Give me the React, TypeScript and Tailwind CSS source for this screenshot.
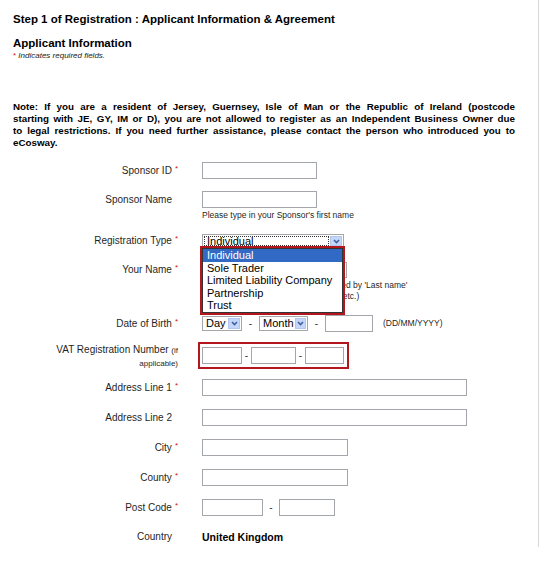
import React from 'react';

type Kids = { children?: React.ReactNode };

const Star = () => (
  <span className="ml-[3px] align-top text-[8px] leading-none text-[#d4141c]">*</span>
);

function Label({ children, star }: Kids & { star?: boolean }) {
  return (
    <div
      className={`w-[178px] shrink-0 text-right text-[10px] leading-[12px] text-[#1f1f1f] ${star ? '' : 'pr-[6px]'}`}
    >
      {children}
      {star && <Star />}
    </div>
  );
}

function TextBox({ w }: { w: string }) {
  return (
    <input
      type="text"
      readOnly
      className={`block h-[17px] shrink-0 border border-[#a3a7ac] bg-white outline-none ${w}`}
    />
  );
}

function Chevron() {
  return (
    <svg width="7" height="5" viewBox="0 0 7 5">
      <path d="M1 1 L3.5 3.6 L6 1" fill="none" stroke="#3f5f9c" strokeWidth="1.5" />
    </svg>
  );
}

function Select({ value, w, h, focus }: { value: string; w: string; h: string; focus?: boolean }) {
  return (
    <div className={`flex shrink-0 items-stretch border border-[#a3a7ac] bg-white p-[1px] ${w} ${h}`}>
      <div
        className={`flex flex-1 items-center pl-[2px] text-[11px] leading-none text-black ${focus ? 'border border-dotted border-[#333]' : ''}`}
      >
        {value}
      </div>
      <div className="ml-[1px] flex w-[12px] items-center justify-center border border-[#b3c6ef] bg-[#c5d6fb]">
        <Chevron />
      </div>
    </div>
  );
}

const Dash = ({ w }: { w: string }) => (
  <span className={`shrink-0 text-center text-[10px] leading-none text-[#333] ${w}`}>-</span>
);

const Hint = ({ children }: Kids) => (
  <div className="whitespace-nowrap text-[8.5px] leading-[11px] text-[#1f1f1f]">{children}</div>
);

export default function App() {
  return (
    <div className='relative h-[567px] w-[550px] overflow-hidden bg-white font-["Liberation_Sans",Arial,sans-serif] text-black'>
      <div className="h-[547px] w-[539px] border-r border-[#d6d6d6]">
        <div className="pl-[13px] pt-[12px]">
          <h1 className="text-[11.5px] font-bold leading-[14px]">
            Step 1 of Registration : Applicant Information &amp; Agreement
          </h1>
          <h2 className="mt-[10px] text-[11.5px] font-bold leading-[14px]">Applicant Information</h2>
          <p className="mt-[1px] text-[8px] italic leading-[10px] text-[#222]">
            <span className="not-italic text-[#d4141c]">*</span> Indicates required fields.
          </p>

          <div className="mt-[40px] w-[502px] text-[9.8px] font-bold leading-[12px]">
            <p className="text-justify [text-align-last:justify]">
              Note: If you are a resident of Jersey, Guernsey, Isle of Man or the Republic of Ireland (postcode
            </p>
            <p className="text-justify [text-align-last:justify]">
              starting with JE, GY, IM or D), you are not allowed to register as an Independent Business Owner due
            </p>
            <p className="text-justify [text-align-last:justify]">
              to legal restrictions. If you need further assistance, please contact the person who introduced you to
            </p>
            <p>eCosway.</p>
          </div>
        </div>

        <div className="flex flex-col">
          <div className="mt-[13px] flex items-center">
            <Label star>Sponsor ID</Label>
            <div className="ml-[24px]">
              <TextBox w="w-[115px]" />
            </div>
          </div>

          <div className="mt-[12px] flex items-start">
            <div className="flex h-[17px] items-center">
              <Label>Sponsor Name</Label>
            </div>
            <div className="ml-[24px] flex flex-col">
              <TextBox w="w-[115px]" />
              <div className="mt-[2px]">
                <Hint>Please type in your Sponsor's first name</Hint>
              </div>
            </div>
          </div>

          <div className="mt-[13px] flex items-center">
            <Label star>Registration Type</Label>
            <div className="ml-[24px]">
              <Select value="Individual" w="w-[142px]" h="h-[14px]" focus />
            </div>
          </div>

          <div className="mt-[14px] flex items-start">
            <div className="flex h-[16px] items-center">
              <Label star>Your Name</Label>
            </div>
            <div className="ml-[24px] flex flex-col">
              <input
                type="text"
                readOnly
                className="block h-[16px] w-[145px] border border-[#a3a7ac] bg-white outline-none"
              />
              <div className="mt-[2px]">
                <Hint>Please key in your 'First name' followed by 'Last name'</Hint>
                <Hint>(without titles like Mr., Mrs., Dr., Prof. etc.)</Hint>
              </div>
            </div>
          </div>

          <div className="mt-[13px] flex items-center">
            <Label star>Date of Birth</Label>
            <div className="ml-[24px] flex items-center">
              <Select value="Day" w="w-[40px]" h="h-[15px]" />
              <Dash w="w-[17px]" />
              <Select value="Month" w="w-[49px]" h="h-[15px]" />
              <Dash w="w-[17px]" />
              <TextBox w="w-[48px]" />
              <span className="ml-[10px] text-[8.5px] leading-none text-[#1f1f1f]">(DD/MM/YYYY)</span>
            </div>
          </div>

          <div className="mt-[10px] flex items-center">
            <div className="w-[178px] shrink-0 pt-[2px] text-right text-[10px] leading-[11.5px] text-[#1f1f1f]">
              VAT Registration Number <span className="text-[8px]">(if</span>
              <br />
              <span className="text-[8px]">applicable)</span>
            </div>
            <div className="ml-[20px] flex items-center border-2 border-[#b3161d] py-[3px] pl-[2px] pr-[3px]">
              <TextBox w="w-[40px]" />
              <Dash w="w-[9px]" />
              <TextBox w="w-[45px]" />
              <Dash w="w-[9px]" />
              <TextBox w="w-[39px]" />
            </div>
          </div>

          <div className="mt-[10px] flex items-center">
            <Label star>Address Line 1</Label>
            <div className="ml-[24px]">
              <TextBox w="w-[265px]" />
            </div>
          </div>

          <div className="mt-[13px] flex items-center">
            <Label>Address Line 2</Label>
            <div className="ml-[24px]">
              <TextBox w="w-[265px]" />
            </div>
          </div>

          <div className="mt-[13px] flex items-center">
            <Label star>City</Label>
            <div className="ml-[24px]">
              <TextBox w="w-[146px]" />
            </div>
          </div>

          <div className="mt-[13px] flex items-center">
            <Label star>County</Label>
            <div className="ml-[24px]">
              <TextBox w="w-[146px]" />
            </div>
          </div>

          <div className="mt-[13px] flex items-center">
            <Label star>Post Code</Label>
            <div className="ml-[24px] flex items-center">
              <TextBox w="w-[61px]" />
              <Dash w="w-[16px]" />
              <TextBox w="w-[56px]" />
            </div>
          </div>

          <div className="mt-[15px] flex items-center">
            <Label>Country</Label>
            <div className="ml-[24px] text-[10.5px] font-bold leading-[12px]">United Kingdom</div>
          </div>
        </div>
      </div>

      {/* open Registration Type list */}
      <div className="absolute left-[200px] top-[246px] w-[145px] border-2 border-[#b3161d] bg-white">
        <ul className="border border-[#333] text-[11px] text-black">
          <li className="flex h-[12.5px] items-center bg-[#316ac5] pl-[4px] text-white">Individual</li>
          <li className="flex h-[12.5px] items-center pl-[4px]">Sole Trader</li>
          <li className="flex h-[12.5px] items-center pl-[4px]">Limited Liability Company</li>
          <li className="flex h-[12.5px] items-center pl-[4px]">Partnership</li>
          <li className="flex h-[12.5px] items-center pl-[4px]">Trust</li>
        </ul>
      </div>
    </div>
  );
}
